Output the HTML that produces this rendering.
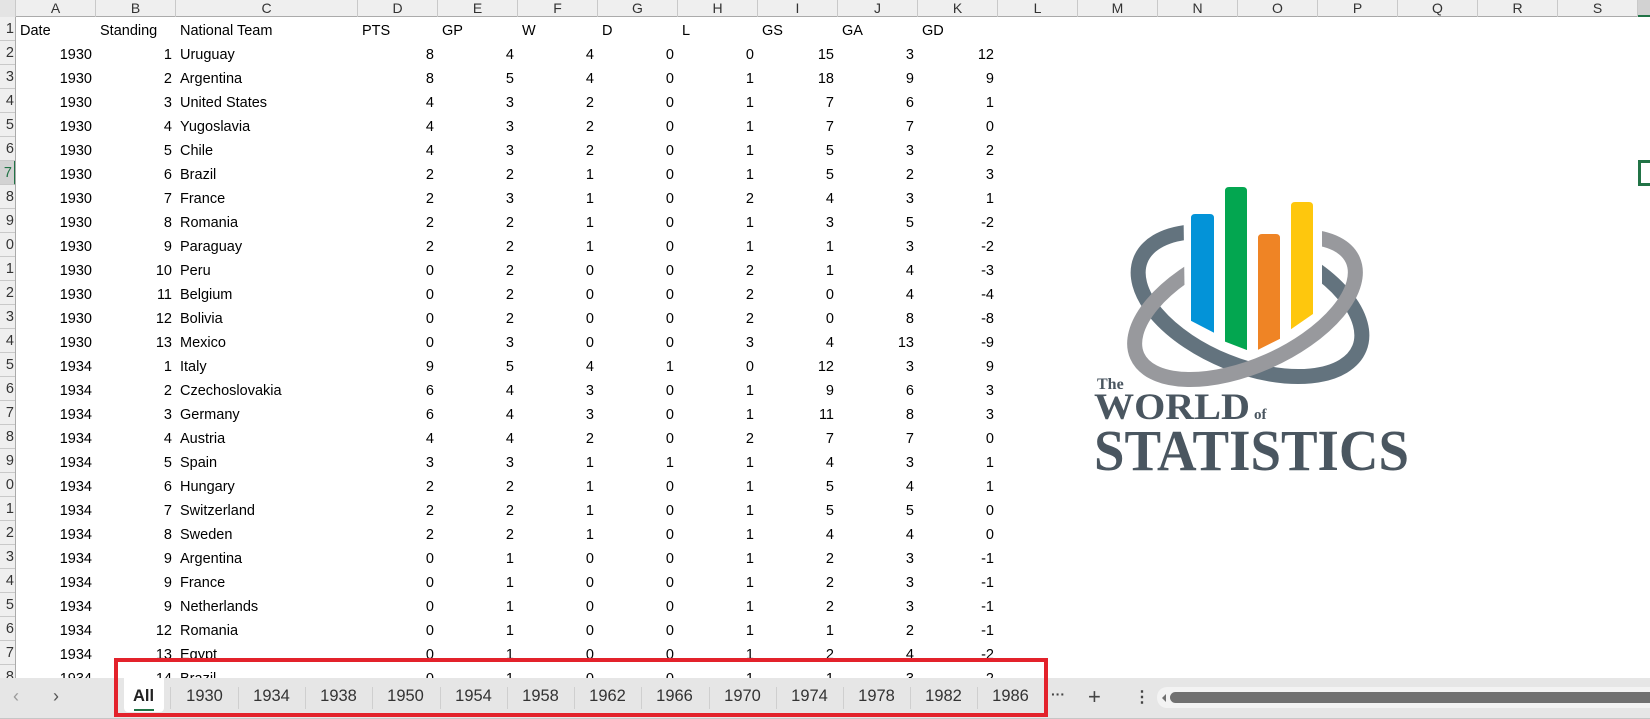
<!DOCTYPE html>
<html><head><meta charset="utf-8"><style>
*{margin:0;padding:0;box-sizing:border-box}
body{width:1650px;height:719px;overflow:hidden;background:#fff;font-family:"Liberation Sans",sans-serif;position:relative;color:#000}
#colh{position:absolute;left:0;top:0;height:17px;width:1650px;background:#efefef;border-bottom:1px solid #ababab;z-index:2}
#colh div{position:absolute;top:0;height:17px;border-right:1px solid #c9c9c9;text-align:center;font-size:14px;line-height:17px;color:#333}
#rowh{position:absolute;left:0;top:17px;width:16px;height:661px;background:#efefef;border-right:1px solid #ababab;overflow:hidden}
#rowh div{height:24px;border-bottom:1px solid #c9c9c9;font-size:14.5px;line-height:25px;text-align:right;padding-right:2px;color:#333;width:16px}
table{position:absolute;left:16px;top:19px;border-collapse:collapse;table-layout:fixed;font-size:14.5px}
td{height:24px;padding:0 4px;white-space:nowrap;overflow:hidden;line-height:24px}
td.r{text-align:right}
#tabs{position:absolute;left:0;top:678px;width:1650px;height:41px;background:#e6e6e6;border-bottom:1px solid #c6c6c6}
.t{position:absolute;top:0;height:40px;line-height:37px;font-size:16.5px;color:#333;text-align:center;width:67px}
.sep{position:absolute;top:9px;width:1px;height:22px;background:#cfcfcf}
</style></head><body>
<div id="colh">
<div style="left:0;width:16px;background:#e4e4e4"></div>
<div style="left:16px;width:80px">A</div>
<div style="left:96px;width:80px">B</div>
<div style="left:176px;width:182px">C</div>
<div style="left:358px;width:80px">D</div>
<div style="left:438px;width:80px">E</div>
<div style="left:518px;width:80px">F</div>
<div style="left:598px;width:80px">G</div>
<div style="left:678px;width:80px">H</div>
<div style="left:758px;width:80px">I</div>
<div style="left:838px;width:80px">J</div>
<div style="left:918px;width:80px">K</div>
<div style="left:998px;width:80px">L</div>
<div style="left:1078px;width:80px">M</div>
<div style="left:1158px;width:80px">N</div>
<div style="left:1238px;width:80px">O</div>
<div style="left:1318px;width:80px">P</div>
<div style="left:1398px;width:80px">Q</div>
<div style="left:1478px;width:80px">R</div>
<div style="left:1558px;width:80px">S</div>
<div style="left:1638px;width:20px;background:#d2d2d2;border-bottom:2px solid #217346"></div>
</div>
<div id="rowh">
<div>1</div><div>2</div><div>3</div><div>4</div><div>5</div><div>6</div><div style="background:#d2d2d2;border-right:2px solid #217346;color:#217346">7</div><div>8</div><div>9</div><div>0</div><div>1</div><div>2</div><div>3</div><div>4</div><div>5</div><div>6</div><div>7</div><div>8</div><div>9</div><div>0</div><div>1</div><div>2</div><div>3</div><div>4</div><div>5</div><div>6</div><div>7</div><div>8</div>
</div>
<table>
<colgroup><col style="width:80px"><col style="width:80px"><col style="width:182px"><col style="width:80px"><col style="width:80px"><col style="width:80px"><col style="width:80px"><col style="width:80px"><col style="width:80px"><col style="width:80px"><col style="width:80px"></colgroup>
<tr><td>Date</td><td>Standing</td><td>National Team</td><td>PTS</td><td>GP</td><td>W</td><td>D</td><td>L</td><td>GS</td><td>GA</td><td>GD</td></tr>
<tr><td class="r">1930</td><td class="r">1</td><td>Uruguay</td><td class="r">8</td><td class="r">4</td><td class="r">4</td><td class="r">0</td><td class="r">0</td><td class="r">15</td><td class="r">3</td><td class="r">12</td></tr>
<tr><td class="r">1930</td><td class="r">2</td><td>Argentina</td><td class="r">8</td><td class="r">5</td><td class="r">4</td><td class="r">0</td><td class="r">1</td><td class="r">18</td><td class="r">9</td><td class="r">9</td></tr>
<tr><td class="r">1930</td><td class="r">3</td><td>United States</td><td class="r">4</td><td class="r">3</td><td class="r">2</td><td class="r">0</td><td class="r">1</td><td class="r">7</td><td class="r">6</td><td class="r">1</td></tr>
<tr><td class="r">1930</td><td class="r">4</td><td>Yugoslavia</td><td class="r">4</td><td class="r">3</td><td class="r">2</td><td class="r">0</td><td class="r">1</td><td class="r">7</td><td class="r">7</td><td class="r">0</td></tr>
<tr><td class="r">1930</td><td class="r">5</td><td>Chile</td><td class="r">4</td><td class="r">3</td><td class="r">2</td><td class="r">0</td><td class="r">1</td><td class="r">5</td><td class="r">3</td><td class="r">2</td></tr>
<tr><td class="r">1930</td><td class="r">6</td><td>Brazil</td><td class="r">2</td><td class="r">2</td><td class="r">1</td><td class="r">0</td><td class="r">1</td><td class="r">5</td><td class="r">2</td><td class="r">3</td></tr>
<tr><td class="r">1930</td><td class="r">7</td><td>France</td><td class="r">2</td><td class="r">3</td><td class="r">1</td><td class="r">0</td><td class="r">2</td><td class="r">4</td><td class="r">3</td><td class="r">1</td></tr>
<tr><td class="r">1930</td><td class="r">8</td><td>Romania</td><td class="r">2</td><td class="r">2</td><td class="r">1</td><td class="r">0</td><td class="r">1</td><td class="r">3</td><td class="r">5</td><td class="r">-2</td></tr>
<tr><td class="r">1930</td><td class="r">9</td><td>Paraguay</td><td class="r">2</td><td class="r">2</td><td class="r">1</td><td class="r">0</td><td class="r">1</td><td class="r">1</td><td class="r">3</td><td class="r">-2</td></tr>
<tr><td class="r">1930</td><td class="r">10</td><td>Peru</td><td class="r">0</td><td class="r">2</td><td class="r">0</td><td class="r">0</td><td class="r">2</td><td class="r">1</td><td class="r">4</td><td class="r">-3</td></tr>
<tr><td class="r">1930</td><td class="r">11</td><td>Belgium</td><td class="r">0</td><td class="r">2</td><td class="r">0</td><td class="r">0</td><td class="r">2</td><td class="r">0</td><td class="r">4</td><td class="r">-4</td></tr>
<tr><td class="r">1930</td><td class="r">12</td><td>Bolivia</td><td class="r">0</td><td class="r">2</td><td class="r">0</td><td class="r">0</td><td class="r">2</td><td class="r">0</td><td class="r">8</td><td class="r">-8</td></tr>
<tr><td class="r">1930</td><td class="r">13</td><td>Mexico</td><td class="r">0</td><td class="r">3</td><td class="r">0</td><td class="r">0</td><td class="r">3</td><td class="r">4</td><td class="r">13</td><td class="r">-9</td></tr>
<tr><td class="r">1934</td><td class="r">1</td><td>Italy</td><td class="r">9</td><td class="r">5</td><td class="r">4</td><td class="r">1</td><td class="r">0</td><td class="r">12</td><td class="r">3</td><td class="r">9</td></tr>
<tr><td class="r">1934</td><td class="r">2</td><td>Czechoslovakia</td><td class="r">6</td><td class="r">4</td><td class="r">3</td><td class="r">0</td><td class="r">1</td><td class="r">9</td><td class="r">6</td><td class="r">3</td></tr>
<tr><td class="r">1934</td><td class="r">3</td><td>Germany</td><td class="r">6</td><td class="r">4</td><td class="r">3</td><td class="r">0</td><td class="r">1</td><td class="r">11</td><td class="r">8</td><td class="r">3</td></tr>
<tr><td class="r">1934</td><td class="r">4</td><td>Austria</td><td class="r">4</td><td class="r">4</td><td class="r">2</td><td class="r">0</td><td class="r">2</td><td class="r">7</td><td class="r">7</td><td class="r">0</td></tr>
<tr><td class="r">1934</td><td class="r">5</td><td>Spain</td><td class="r">3</td><td class="r">3</td><td class="r">1</td><td class="r">1</td><td class="r">1</td><td class="r">4</td><td class="r">3</td><td class="r">1</td></tr>
<tr><td class="r">1934</td><td class="r">6</td><td>Hungary</td><td class="r">2</td><td class="r">2</td><td class="r">1</td><td class="r">0</td><td class="r">1</td><td class="r">5</td><td class="r">4</td><td class="r">1</td></tr>
<tr><td class="r">1934</td><td class="r">7</td><td>Switzerland</td><td class="r">2</td><td class="r">2</td><td class="r">1</td><td class="r">0</td><td class="r">1</td><td class="r">5</td><td class="r">5</td><td class="r">0</td></tr>
<tr><td class="r">1934</td><td class="r">8</td><td>Sweden</td><td class="r">2</td><td class="r">2</td><td class="r">1</td><td class="r">0</td><td class="r">1</td><td class="r">4</td><td class="r">4</td><td class="r">0</td></tr>
<tr><td class="r">1934</td><td class="r">9</td><td>Argentina</td><td class="r">0</td><td class="r">1</td><td class="r">0</td><td class="r">0</td><td class="r">1</td><td class="r">2</td><td class="r">3</td><td class="r">-1</td></tr>
<tr><td class="r">1934</td><td class="r">9</td><td>France</td><td class="r">0</td><td class="r">1</td><td class="r">0</td><td class="r">0</td><td class="r">1</td><td class="r">2</td><td class="r">3</td><td class="r">-1</td></tr>
<tr><td class="r">1934</td><td class="r">9</td><td>Netherlands</td><td class="r">0</td><td class="r">1</td><td class="r">0</td><td class="r">0</td><td class="r">1</td><td class="r">2</td><td class="r">3</td><td class="r">-1</td></tr>
<tr><td class="r">1934</td><td class="r">12</td><td>Romania</td><td class="r">0</td><td class="r">1</td><td class="r">0</td><td class="r">0</td><td class="r">1</td><td class="r">1</td><td class="r">2</td><td class="r">-1</td></tr>
<tr><td class="r">1934</td><td class="r">13</td><td>Egypt</td><td class="r">0</td><td class="r">1</td><td class="r">0</td><td class="r">0</td><td class="r">1</td><td class="r">2</td><td class="r">4</td><td class="r">-2</td></tr>
<tr><td class="r">1934</td><td class="r">14</td><td>Brazil</td><td class="r">0</td><td class="r">1</td><td class="r">0</td><td class="r">0</td><td class="r">1</td><td class="r">1</td><td class="r">3</td><td class="r">-2</td></tr>
</table>

<div style="position:absolute;left:1638px;top:160px;width:14px;height:26px;border:3px solid #217346;border-right:none"></div>

<svg style="position:absolute;left:0;top:0" width="1650" height="719" viewBox="0 0 1650 719">
  <ellipse cx="1250" cy="304" rx="118" ry="62" transform="rotate(22 1250 304)" fill="none" stroke="#63737e" stroke-width="15"/>
  <ellipse cx="1245" cy="308" rx="118" ry="58" transform="rotate(-24 1245 308)" fill="none" stroke="#98999d" stroke-width="15"/>
  <polygon points="1183,175 1322,175 1322,312 1282,338 1252,356 1223,346 1185,324" fill="#fff"/>
  <path d="M1189 218 Q1189 212 1195 212 L1210 212 Q1216 212 1216 218 L1216 336 L1189 322 Z" fill="#0393d8" stroke="#fff" stroke-width="4"/>
  <path d="M1223 191 Q1223 185 1229 185 L1243 185 Q1249 185 1249 191 L1249 353 L1223 343 Z" fill="#03a650" stroke="#fff" stroke-width="4"/>
  <path d="M1256 238 Q1256 232 1262 232 L1276 232 Q1282 232 1282 238 L1282 340 L1256 353 Z" fill="#ef8425" stroke="#fff" stroke-width="4"/>
  <path d="M1289 206 Q1289 200 1295 200 L1309 200 Q1315 200 1315 206 L1315 315 L1289 333 Z" fill="#fec70d" stroke="#fff" stroke-width="4"/>
  <text x="1097" y="389" font-family="Liberation Serif,serif" font-weight="bold" font-size="16" fill="#4a5660">The</text>
  <text x="1094" y="419" font-family="Liberation Serif,serif" font-weight="bold" font-size="37" fill="#4a5660" textLength="156" lengthAdjust="spacingAndGlyphs">WORLD</text>
  <text x="1254" y="419" font-family="Liberation Serif,serif" font-weight="bold" font-size="15" fill="#4a5660">of</text>
  <text x="1094" y="470" font-family="Liberation Serif,serif" font-weight="bold" font-size="58" fill="#4a5660" textLength="315" lengthAdjust="spacingAndGlyphs">STATISTICS</text>
</svg>

<div id="tabs">
  <div style="position:absolute;left:13px;top:8px;font-size:18px;color:#9a9a9a">&#8249;</div>
  <div style="position:absolute;left:53px;top:8px;font-size:18px;color:#555">&#8250;</div>
  <div style="position:absolute;left:124px;top:0;width:40px;height:34px;background:#fff;border-radius:0 0 4px 4px"></div>
  <div class="t" style="left:110px;font-weight:bold;color:#222">All</div>
  <div style="position:absolute;left:134px;top:31px;width:20px;height:2px;background:#217346"></div>
  <div class="sep" style="left:170px"></div>
  <div class="t" style="left:171px">1930</div><div class="sep" style="left:238px"></div>
  <div class="t" style="left:238px">1934</div><div class="sep" style="left:305px"></div>
  <div class="t" style="left:305px">1938</div><div class="sep" style="left:372px"></div>
  <div class="t" style="left:372px">1950</div><div class="sep" style="left:440px"></div>
  <div class="t" style="left:440px">1954</div><div class="sep" style="left:507px"></div>
  <div class="t" style="left:507px">1958</div><div class="sep" style="left:574px"></div>
  <div class="t" style="left:574px">1962</div><div class="sep" style="left:641px"></div>
  <div class="t" style="left:641px">1966</div><div class="sep" style="left:709px"></div>
  <div class="t" style="left:709px">1970</div><div class="sep" style="left:776px"></div>
  <div class="t" style="left:776px">1974</div><div class="sep" style="left:843px"></div>
  <div class="t" style="left:843px">1978</div><div class="sep" style="left:910px"></div>
  <div class="t" style="left:910px">1982</div><div class="sep" style="left:977px"></div>
  <div class="t" style="left:977px">1986</div>
  <div style="position:absolute;left:1051px;top:8px;font-size:14px;font-weight:bold;color:#444">&middot;&middot;&middot;</div>
  <div style="position:absolute;left:1088px;top:6px;font-size:22px;color:#444">+</div>
  <div style="position:absolute;left:1134px;top:9px;font-size:16px;font-weight:bold;color:#444">&#8942;</div>
  <div style="position:absolute;left:1157px;top:9px;width:500px;height:21px;background:#f3f3f3;border-radius:10px 0 0 10px"></div>
  <div style="position:absolute;left:1162px;top:16px;width:0;height:0;border-top:4px solid transparent;border-bottom:4px solid transparent;border-right:4px solid #707070"></div>
  <div style="position:absolute;left:1170px;top:14px;width:490px;height:11px;background:#707070;border-radius:6px 0 0 6px"></div>
</div>
<div style="position:absolute;left:114px;top:658px;width:934px;height:59px;border:4px solid #e3222b"></div>
</body></html>
